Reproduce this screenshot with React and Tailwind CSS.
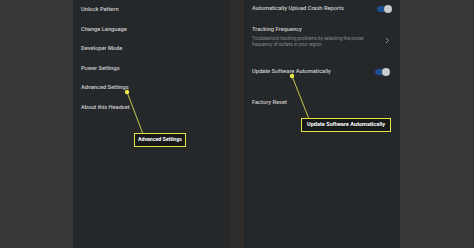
import React from "react";

const Toggle = () => (
  <div className="relative w-[15px] h-[8px] flex items-center">
    <div className="w-[14px] h-[6px] rounded-full bg-[#1d4f8f]" />
    <div className="absolute right-0 w-[8px] h-[8px] rounded-full bg-[#c9cbcd]" />
  </div>
);

const leftItems = [
  "Unlock Pattern",
  "Change Language",
  "Developer Mode",
  "Power Settings",
  "Advanced Settings",
  "About this Headset",
];

const App = () => {
  return (
    <div
      className="relative w-[474px] h-[248px] overflow-hidden bg-[#373737] flex text-[#cdcecf]"
      style={{ fontFamily: "Roboto, 'Liberation Sans', sans-serif" }}
    >
      {/* left margin */}
      <div className="w-[73px] shrink-0" />

      {/* left panel */}
      <div className="w-[156px] shrink-0 bg-[#25282b] pl-[8px] flex flex-col">
        {leftItems.map((item) => (
          <div
            key={item}
            className="h-[19.6px] flex items-center text-[5.7px] font-medium leading-none"
          >
            {item}
          </div>
        ))}
      </div>

      {/* gap */}
      <div className="w-[16px] shrink-0 bg-[#2e2d2c] border-x border-[#262626]" />

      {/* right panel */}
      <div className="w-[155px] shrink-0 bg-[#25282b] pl-[7px] pr-[8px] flex flex-col text-[5.7px] font-medium leading-none">
        <div className="h-[18px] flex items-center justify-between">
          <span>Automatically Upload Crash Reports</span>
          <Toggle />
        </div>
        <div className="mt-[8px] flex items-center justify-between">
          <div className="flex flex-col">
            <span className="h-[7px] flex items-center">Tracking Frequency</span>
            <span className="mt-[3px] text-[4.6px] leading-[6px] font-normal text-[#85888b]">
              Troubleshoot tracking problems by selecting the power
              <br />
              frequency of outlets in your region
            </span>
          </div>
          <svg width="5" height="7" viewBox="0 0 5 7" className="mr-[2px] mt-[6px]">
            <path d="M1 1 L3.5 3.5 L1 6" stroke="#9a9c9e" strokeWidth="1" fill="none" />
          </svg>
        </div>
        <div className="mt-[19px] h-[10px] flex items-center justify-between pr-[2px]">
          <span>Update Software Automatically</span>
          <Toggle />
        </div>
        <div className="mt-[21px] h-[10px] flex items-center">Factory Reset</div>
      </div>

      {/* right margin */}
      <div className="flex-1" />

      {/* callout lines */}
      <svg className="absolute inset-0 pointer-events-none" width="474" height="248">
        <line x1="127" y1="92" x2="143" y2="134" stroke="#d8d84a" strokeWidth="0.9" />
        <circle cx="127" cy="92" r="2.2" fill="#e8e84a" />
        <line x1="292" y1="76" x2="309" y2="119" stroke="#d8d84a" strokeWidth="0.9" />
        <circle cx="292" cy="76" r="2.2" fill="#e8e84a" />
      </svg>

      {/* callout boxes */}
      <div className="absolute left-[134px] top-[133px] w-[52px] h-[14px] border-[1.5px] border-[#e6e63a] bg-[#17181a] flex items-center justify-center text-white text-[5.2px] font-bold leading-none whitespace-nowrap">
        Advanced Settings
      </div>
      <div className="absolute left-[301px] top-[118px] w-[90px] h-[14px] border-[1.5px] border-[#e6e63a] bg-[#17181a] flex items-center justify-center text-white text-[5.6px] font-bold leading-none whitespace-nowrap">
        Update Software Automatically
      </div>
    </div>
  );
};

export default App;
